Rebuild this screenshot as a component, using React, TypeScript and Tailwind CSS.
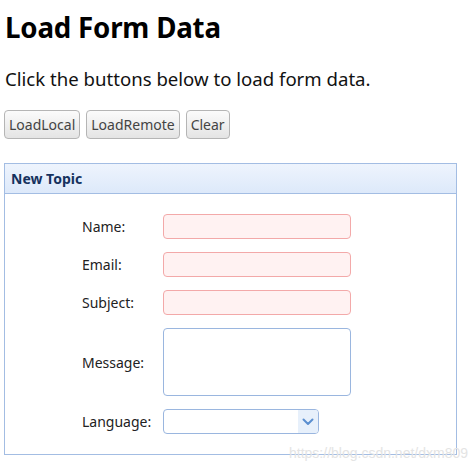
export default function App() {
  const fields = [
    { label: 'Name:', kind: 'text' },
    { label: 'Email:', kind: 'text' },
    { label: 'Subject:', kind: 'text' },
  ];

  return (
    <div className="relative w-[474px] h-[474px] bg-white text-black font-['Noto_Sans','Open_Sans',sans-serif] px-[4px] overflow-hidden">
      <h1 className="pt-[7px] pl-[1px] text-[27.7px] leading-[40px] font-bold tracking-[-0.2px]">Load Form Data</h1>
      <p className="mt-[19px] pl-[1px] text-[18.6px] leading-[26px] text-[#111]">Click the buttons below to load form data.</p>

      <div className="mt-[18px] flex gap-[6px]">
        {['LoadLocal', 'LoadRemote', 'Clear'].map((b) => (
          <button
            key={b}
            className="h-[29px] px-[4px] rounded-[4px] border border-[#b5b5b5] bg-gradient-to-b from-[#fbfbfb] to-[#e4e4e4] text-[14px] text-[#444] leading-none"
          >
            {b}
          </button>
        ))}
      </div>

      {/* form panel */}
      <div className="mt-[24px] w-[453px] h-[292px] border border-[#a3bde3]">
        <div className="h-[30px] flex items-center pl-[6px] border-b border-[#a3bde3] bg-gradient-to-b from-[#eef4fd] to-[#dde9fa]">
          <span className="text-[14px] font-bold text-[#15325e]">New Topic</span>
        </div>

        <div className="pt-[20px] pl-[77px] flex flex-col gap-[13px] text-[14px] text-[#222]">
          {fields.map((f) => (
            <div key={f.label} className="flex items-center">
              <span className="w-[81px]">{f.label}</span>
              <div className="w-[188px] h-[25px] rounded-[4px] border border-[#f3a9a9] bg-[#fff2f2]" />
            </div>
          ))}

          <div className="flex items-center">
            <span className="w-[81px]">Message:</span>
            <div className="w-[188px] h-[68px] rounded-[4px] border border-[#9ab6df] bg-white" />
          </div>

          <div className="flex items-center">
            <span className="w-[81px]">Language:</span>
            <div className="w-[156px] h-[25px] rounded-[4px] border border-[#9ab6df] bg-white flex justify-end overflow-hidden">
              <div className="w-[20px] h-full bg-[#e7f0fb] flex items-center justify-center">
                <svg width="12" height="8" viewBox="0 0 12 8" fill="none">
                  <path d="M1.5 1.5 L6 6 L10.5 1.5" stroke="#5b8fd0" strokeWidth="2" strokeLinecap="round" strokeLinejoin="round" />
                </svg>
              </div>
            </div>
          </div>
        </div>
      </div>

      <span className="absolute right-[6px] bottom-[10px] text-[14px] text-[#e4e4e4] font-['Liberation_Sans',sans-serif]">https://blog.csdn.net/dxm809</span>
    </div>
  );
}
